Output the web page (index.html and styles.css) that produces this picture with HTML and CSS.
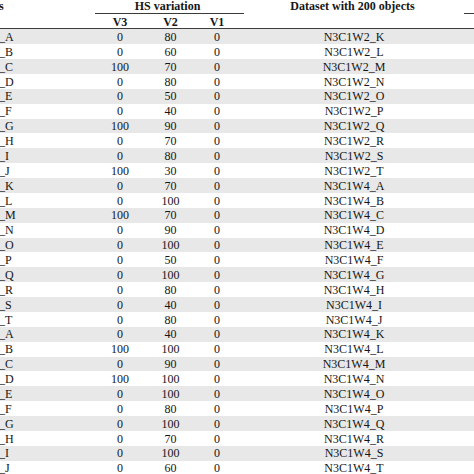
FILE: index.html
```html
<!DOCTYPE html>
<html>
<head>
<meta charset="utf-8">
<link rel="stylesheet" href="styles.css">
</head>
<body>
<div class="tbl">
  <div class="head1">
    <div class="c-left bold"><span class="clip">s</span></div>
    <div class="c-group bold">HS variation</div>
    <div class="c-data bold">Dataset with 200 objects</div>
    <div class="c-rest"></div>
  </div>
  <div class="head2">
    <div class="c-left"></div>
    <div class="c-v3 bold">V3</div>
    <div class="c-v2 bold">V2</div>
    <div class="c-v1 bold">V1</div>
    <div class="c-d"></div>
  </div>
  <div class="body">
    <div class="row"><div class="c-left"><span class="clip">_A</span></div><div class="c-v3">0</div><div class="c-v2">80</div><div class="c-v1">0</div><div class="c-d">N3C1W2_K</div></div>
    <div class="row"><div class="c-left"><span class="clip">_B</span></div><div class="c-v3">0</div><div class="c-v2">60</div><div class="c-v1">0</div><div class="c-d">N3C1W2_L</div></div>
    <div class="row"><div class="c-left"><span class="clip">_C</span></div><div class="c-v3">100</div><div class="c-v2">70</div><div class="c-v1">0</div><div class="c-d">N3C1W2_M</div></div>
    <div class="row"><div class="c-left"><span class="clip">_D</span></div><div class="c-v3">0</div><div class="c-v2">80</div><div class="c-v1">0</div><div class="c-d">N3C1W2_N</div></div>
    <div class="row"><div class="c-left"><span class="clip">_E</span></div><div class="c-v3">0</div><div class="c-v2">50</div><div class="c-v1">0</div><div class="c-d">N3C1W2_O</div></div>
    <div class="row"><div class="c-left"><span class="clip">_F</span></div><div class="c-v3">0</div><div class="c-v2">40</div><div class="c-v1">0</div><div class="c-d">N3C1W2_P</div></div>
    <div class="row"><div class="c-left"><span class="clip">_G</span></div><div class="c-v3">100</div><div class="c-v2">90</div><div class="c-v1">0</div><div class="c-d">N3C1W2_Q</div></div>
    <div class="row"><div class="c-left"><span class="clip">_H</span></div><div class="c-v3">0</div><div class="c-v2">70</div><div class="c-v1">0</div><div class="c-d">N3C1W2_R</div></div>
    <div class="row"><div class="c-left"><span class="clip">_I</span></div><div class="c-v3">0</div><div class="c-v2">80</div><div class="c-v1">0</div><div class="c-d">N3C1W2_S</div></div>
    <div class="row"><div class="c-left"><span class="clip">_J</span></div><div class="c-v3">100</div><div class="c-v2">30</div><div class="c-v1">0</div><div class="c-d">N3C1W2_T</div></div>
    <div class="row"><div class="c-left"><span class="clip">_K</span></div><div class="c-v3">0</div><div class="c-v2">70</div><div class="c-v1">0</div><div class="c-d">N3C1W4_A</div></div>
    <div class="row"><div class="c-left"><span class="clip">_L</span></div><div class="c-v3">0</div><div class="c-v2">100</div><div class="c-v1">0</div><div class="c-d">N3C1W4_B</div></div>
    <div class="row"><div class="c-left"><span class="clip">_M</span></div><div class="c-v3">100</div><div class="c-v2">70</div><div class="c-v1">0</div><div class="c-d">N3C1W4_C</div></div>
    <div class="row"><div class="c-left"><span class="clip">_N</span></div><div class="c-v3">0</div><div class="c-v2">90</div><div class="c-v1">0</div><div class="c-d">N3C1W4_D</div></div>
    <div class="row"><div class="c-left"><span class="clip">_O</span></div><div class="c-v3">0</div><div class="c-v2">100</div><div class="c-v1">0</div><div class="c-d">N3C1W4_E</div></div>
    <div class="row"><div class="c-left"><span class="clip">_P</span></div><div class="c-v3">0</div><div class="c-v2">50</div><div class="c-v1">0</div><div class="c-d">N3C1W4_F</div></div>
    <div class="row"><div class="c-left"><span class="clip">_Q</span></div><div class="c-v3">0</div><div class="c-v2">100</div><div class="c-v1">0</div><div class="c-d">N3C1W4_G</div></div>
    <div class="row"><div class="c-left"><span class="clip">_R</span></div><div class="c-v3">0</div><div class="c-v2">80</div><div class="c-v1">0</div><div class="c-d">N3C1W4_H</div></div>
    <div class="row"><div class="c-left"><span class="clip">_S</span></div><div class="c-v3">0</div><div class="c-v2">40</div><div class="c-v1">0</div><div class="c-d">N3C1W4_I</div></div>
    <div class="row"><div class="c-left"><span class="clip">_T</span></div><div class="c-v3">0</div><div class="c-v2">80</div><div class="c-v1">0</div><div class="c-d">N3C1W4_J</div></div>
    <div class="row"><div class="c-left"><span class="clip">_A</span></div><div class="c-v3">0</div><div class="c-v2">40</div><div class="c-v1">0</div><div class="c-d">N3C1W4_K</div></div>
    <div class="row"><div class="c-left"><span class="clip">_B</span></div><div class="c-v3">100</div><div class="c-v2">100</div><div class="c-v1">0</div><div class="c-d">N3C1W4_L</div></div>
    <div class="row"><div class="c-left"><span class="clip">_C</span></div><div class="c-v3">0</div><div class="c-v2">90</div><div class="c-v1">0</div><div class="c-d">N3C1W4_M</div></div>
    <div class="row"><div class="c-left"><span class="clip">_D</span></div><div class="c-v3">100</div><div class="c-v2">100</div><div class="c-v1">0</div><div class="c-d">N3C1W4_N</div></div>
    <div class="row"><div class="c-left"><span class="clip">_E</span></div><div class="c-v3">0</div><div class="c-v2">100</div><div class="c-v1">0</div><div class="c-d">N3C1W4_O</div></div>
    <div class="row"><div class="c-left"><span class="clip">_F</span></div><div class="c-v3">0</div><div class="c-v2">80</div><div class="c-v1">0</div><div class="c-d">N3C1W4_P</div></div>
    <div class="row"><div class="c-left"><span class="clip">_G</span></div><div class="c-v3">0</div><div class="c-v2">100</div><div class="c-v1">0</div><div class="c-d">N3C1W4_Q</div></div>
    <div class="row"><div class="c-left"><span class="clip">_H</span></div><div class="c-v3">0</div><div class="c-v2">70</div><div class="c-v1">0</div><div class="c-d">N3C1W4_R</div></div>
    <div class="row"><div class="c-left"><span class="clip">_I</span></div><div class="c-v3">0</div><div class="c-v2">100</div><div class="c-v1">0</div><div class="c-d">N3C1W4_S</div></div>
    <div class="row"><div class="c-left"><span class="clip">_J</span></div><div class="c-v3">0</div><div class="c-v2">60</div><div class="c-v1">0</div><div class="c-d">N3C1W4_T</div></div>
  </div>
</div>
</body>
</html>
```
FILE: styles.css
```css
html, body {
  margin: 0;
  padding: 0;
  background: #ffffff;
}
body {
  width: 474px;
  height: 474px;
  overflow: hidden;
  font-family: "Liberation Serif", "Times New Roman", serif;
  font-size: 12px;
  color: #161616;
}
.tbl {
  width: 474px;
  display: flex;
  flex-direction: column;
}
.bold {
  font-weight: bold;
}
.head1 {
  display: flex;
  height: 14px;
  line-height: 13px;
}
.head1 > div {
  box-sizing: border-box;
  height: 14px;
  white-space: nowrap;
}
.head1 .c-left {
  width: 95px;
}
.head1 .c-group {
  width: 149px;
  border-bottom: 1px solid #3a3a3a;
  text-align: center;
  padding-right: 4px;
}
.head1 .c-data {
  width: 220px;
  text-align: center;
  padding-right: 3px;
}
.head1 .c-rest {
  flex: 1;
  border-bottom: 1px solid #3a3a3a;
}
.head2 {
  display: flex;
  height: 14px;
  box-sizing: content-box;
  padding-top: 0;
  line-height: 12px;
  border-bottom: 2px solid #3c3c3c;
}
.head2 > div {
  padding-top: 2px;
}
.c-left {
  width: 95px;
  overflow: hidden;
  white-space: nowrap;
}
.clip {
  display: inline-block;
  margin-left: -1px;
}
.c-v3 {
  width: 50px;
  text-align: center;
}
.c-v2 {
  width: 51px;
  text-align: center;
}
.c-v1 {
  width: 42px;
  text-align: center;
}
.c-d {
  width: 232px;
  text-align: center;
}
.body {
  display: flex;
  flex-direction: column;
  margin-top: -0.7px;
}
.row {
  display: flex;
  height: 14.89px;
  line-height: 12px;
  flex-shrink: 0;
}
.row > div {
  padding-top: 1.6px;
  white-space: nowrap;
}
.row:nth-child(odd) {
  background: #e7e8e7;
}
```
